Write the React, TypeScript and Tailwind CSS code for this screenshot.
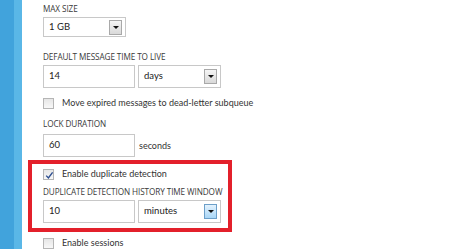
import type { ReactNode } from 'react';

function Label({ children }: { children: ReactNode }) {
  return (
    <p className="h-[12px] whitespace-nowrap font-['Open_Sans',sans-serif] text-[8.2px] leading-[12px] tracking-[-0.1px] text-[#3a3a3a] uppercase">
      {children}
    </p>
  );
}

function Arrow({ active }: { active?: boolean }) {
  return (
    <span
      className={`flex h-[15px] w-[13px] items-center justify-center border ${
        active
          ? 'border-[#6c9fc9] bg-gradient-to-b from-[#e3f2fd] to-[#a9d6f6]'
          : 'border-[#a9a9a9] bg-gradient-to-b from-[#f5f5f5] to-[#d9d9d9]'
      }`}
    >
      <span className="h-0 w-0 border-x-[3px] border-t-[3px] border-x-transparent border-t-[#111]" />
    </span>
  );
}

function TextBox({ value }: { value: string }) {
  return (
    <div className="flex h-[23px] w-[92px] items-center border border-[#c8c8c8] bg-white pl-[5px] text-[9.5px] text-[#222]">
      {value}
    </div>
  );
}

function Select({ value, short, active }: { value: string; short?: boolean; active?: boolean }) {
  return (
    <div
      className={`flex w-[83px] items-center justify-between border border-[#c8c8c8] bg-white pl-[5px] pr-[3px] text-[9.5px] text-[#222] ${
        short ? 'h-[20px]' : 'h-[23px]'
      }`}
    >
      <span>{value}</span>
      <Arrow active={active} />
    </div>
  );
}

function Check({ checked, label }: { checked?: boolean; label: string }) {
  return (
    <div className="flex h-[12px] items-center gap-[8px]">
      <span className="relative h-[11px] w-[11px] border border-[#b5b5b5] bg-gradient-to-b from-[#e6e6e6] to-[#f8f8f8]">
        {checked ? (
          <svg viewBox="0 0 11 11" className="absolute inset-0 h-[11px] w-[11px]">
            <path d="M2.2 5.6 L4.4 8 L8.6 2.4" fill="none" stroke="#2b4d8f" strokeWidth="1.4" />
          </svg>
        ) : null}
      </span>
      <span className="whitespace-nowrap text-[9px] text-[#333]">{label}</span>
    </div>
  );
}

export default function App() {
  return (
    <div className="flex h-[249px] w-[474px] overflow-hidden bg-white font-['Lato',sans-serif]">
      <div className="flex w-[22px] shrink-0">
        <div className="w-[14px] bg-[#41a3dc]" />
        <div className="w-[8px] bg-[#5ab7e7]" />
      </div>

      <div className="flex flex-col pl-[21px] pt-[3px]">
        <Label>Max size</Label>
        <div className="mt-[2px]">
          <Select value="1 GB" short />
        </div>

        <div className="mt-[14px]">
          <Label>Default message time to live</Label>
        </div>
        <div className="mt-[2px] flex gap-[3px]">
          <TextBox value="14" />
          <Select value="days" />
        </div>

        <div className="mt-[9px]">
          <Check label="Move expired messages to dead-letter subqueue" />
        </div>

        <div className="mt-[9px]">
          <Label>Lock duration</Label>
        </div>
        <div className="mt-[4px] flex items-center gap-[4px]">
          <TextBox value="60" />
          <span className="text-[9px] text-[#333]">seconds</span>
        </div>

        <div className="-ml-[15px] mt-[3px] w-[204px] border-[4px] border-[#e3202b] pb-[5px] pl-[11px] pt-[4px]">
          <Check checked label="Enable duplicate detection" />
          <div className="mt-[6px]">
            <Label>Duplicate detection history time window</Label>
          </div>
          <div className="mt-[2px] flex gap-[3px]">
            <TextBox value="10" />
            <Select value="minutes" active />
          </div>
        </div>

        <div className="mt-[5px]">
          <Check label="Enable sessions" />
        </div>
      </div>
    </div>
  );
}
